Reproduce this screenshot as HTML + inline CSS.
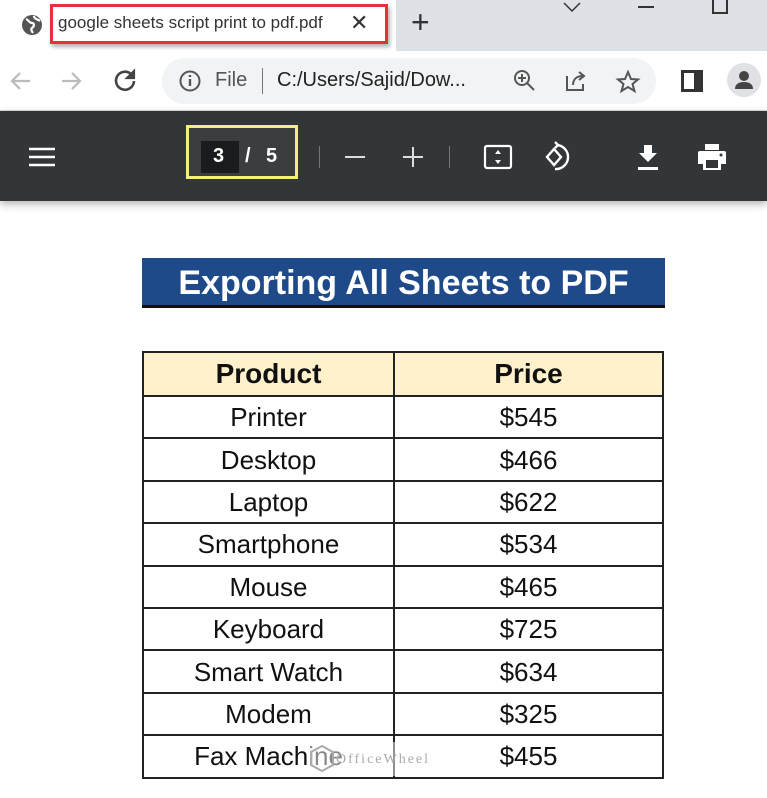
<!DOCTYPE html>
<html><head><style>
*{margin:0;padding:0;box-sizing:border-box}
body{width:767px;height:798px;overflow:hidden;background:#fff;font-family:"Liberation Sans",sans-serif;position:relative}
.abs{position:absolute}
table{border-collapse:collapse;position:absolute;left:142px;top:351px;width:522px}
td{border:2px solid #222;text-align:center;font-size:26px;color:#111;height:42.4px;padding:0;line-height:38px}
tr.h td{background:#fff1cc;font-weight:bold;font-size:28px;height:44px}
</style></head><body>
<div class="abs" style="left:0;top:0;width:767px;height:51px;background:#dee1e6"></div>
<div class="abs" style="left:0;top:0;width:396px;height:51px;background:#fff"></div>
<svg class="abs" style="left:20px;top:13px" width="24" height="24" viewBox="0 0 24 24"><circle cx="12" cy="12" r="10" fill="#555"/><path d="M6 6c3 1 3 4 6 4s2 4 0 5 1 5 1 5M14 3c0 3 3 3 6 5" stroke="#fff" stroke-width="2.2" fill="none"/></svg>
<div class="abs" style="left:50px;top:4px;width:338px;height:40px;border:3px solid #e8303a;box-shadow:2px 3px 4px rgba(0,0,0,.3)"></div>
<div class="abs" style="left:58px;top:13px;font-size:17px;color:#333;white-space:nowrap;width:278px;overflow:hidden">google sheets script print to pdf.pdf</div>
<div class="abs" style="left:350px;top:10px;font-size:22px;color:#333">✕</div>
<div class="abs" style="left:411px;top:4px;font-size:32px;color:#333">+</div>
<svg class="abs" style="left:562px;top:0" width="20" height="14"><path d="M2 3l8 8 8-8" stroke="#333" stroke-width="1.5" fill="none"/></svg>
<div class="abs" style="left:638px;top:6px;width:16px;height:2px;background:#333"></div>
<div class="abs" style="left:712px;top:-2px;width:16px;height:16px;border:2px solid #333"></div>
<div class="abs" style="left:0;top:51px;width:767px;height:60px;background:#fff;border-bottom:1px solid #ddd"></div>
<svg class="abs" style="left:8px;top:68px" width="130" height="26"><g stroke-width="2.2" fill="none"><path d="M22 13H4M12 5l-8 8 8 8" stroke="#bbb"/><path d="M54 13h18M64 5l8 8-8 8" stroke="#bbb"/><path d="M126 13a9 9 0 1 1-3-7" stroke="#444" stroke-width="2.6"/><path d="M126 3v7h-7z" fill="#444" stroke="#444"/></g></svg>
<div class="abs" style="left:162px;top:58px;width:494px;height:46px;border-radius:23px;background:#f1f3f4"></div>
<svg class="abs" style="left:178px;top:69px" width="24" height="24"><circle cx="12" cy="12" r="9.5" stroke="#555" stroke-width="2" fill="none"/><path d="M12 10v7M12 6v2" stroke="#555" stroke-width="2.4"/></svg>
<div class="abs" style="left:215px;top:69px;font-size:20px;color:#555">File</div>
<div class="abs" style="left:262px;top:68px;width:1px;height:26px;background:#777"></div>
<div class="abs" style="left:277px;top:69px;font-size:20px;color:#222">C:/Users/Sajid/Dow...</div>
<svg class="abs" style="left:512px;top:68px" width="130" height="28"><g stroke="#555" stroke-width="2" fill="none"><circle cx="10" cy="10" r="7"/><path d="M15 15l7 7M10 6v8M6 10h8"/><path d="M55 8v14h16v-6M61 17c0-6 4-9 10-9M67 4l5 4-5 4"/><path d="M116 4l3 7 7 .5-5.5 4.5 2 7-6.5-4-6.5 4 2-7-5.5-4.5 7-.5z"/></g></svg>
<div class="abs" style="left:681px;top:70px;width:22px;height:22px;border:3px solid #333;border-right-width:9px"></div>
<div class="abs" style="left:727px;top:63px;width:34px;height:34px;border-radius:50%;background:#dfe1e5"></div>
<svg class="abs" style="left:727px;top:63px" width="34" height="34"><circle cx="17" cy="13" r="5" fill="#444"/><path d="M8 26c0-5 4-7 9-7s9 2 9 7z" fill="#444"/></svg>
<div class="abs" style="left:0;top:111px;width:767px;height:90px;background:#323639;box-shadow:0 3px 8px rgba(0,0,0,.3)"></div>
<svg class="abs" style="left:28px;top:146px" width="28" height="22"><path d="M1 3h26M1 11h26M1 19h26" stroke="#fff" stroke-width="2.6"/></svg>
<div class="abs" style="left:186px;top:125px;width:112px;height:54px;border:3px solid #f4f07a;background:#3a3e41"></div>
<div class="abs" style="left:201px;top:141px;width:38px;height:32px;background:#191b1c"></div>
<div class="abs" style="left:213px;top:145px;font-size:20px;color:#fff;font-weight:bold">3</div>
<div class="abs" style="left:245px;top:145px;font-size:20px;color:#fff;font-weight:bold">/</div>
<div class="abs" style="left:266px;top:145px;font-size:20px;color:#fff;font-weight:bold">5</div>
<div class="abs" style="left:319px;top:146px;width:1px;height:22px;background:#777"></div>
<div class="abs" style="left:345px;top:156px;width:20px;height:2px;background:#ddd"></div>
<div class="abs" style="left:403px;top:156px;width:20px;height:2px;background:#ddd"></div>
<div class="abs" style="left:412px;top:147px;width:2px;height:20px;background:#ddd"></div>
<div class="abs" style="left:449px;top:146px;width:1px;height:22px;background:#777"></div>
<svg class="abs" style="left:482px;top:142px" width="32" height="30"><rect x="3" y="4" width="26" height="22" rx="2" stroke="#fff" stroke-width="2.2" fill="none"/><path d="M16 8l-3 4h6zM16 22l-3-4h6z" fill="#fff"/></svg>
<svg class="abs" style="left:540px;top:140px" width="34" height="34"><g stroke="#fff" stroke-width="2.4" fill="none"><path d="M14 9l7 8-7 8-7-8z"/><path d="M17 5a11 11 0 1 1-2 24"/><path d="M15 2l3 3-3 3"/></g></svg>
<svg class="abs" style="left:636px;top:143px" width="24" height="28"><path d="M8 2h8v8h5l-9 9-9-9h5z M2 24h20v3H2z" fill="#fff"/></svg>
<svg class="abs" style="left:697px;top:143px" width="30" height="28"><path d="M8 1h14v6H8zM3 8h24a2 2 0 0 1 2 2v11h-5v6H6v-6H1V10a2 2 0 0 1 2-2z" fill="#fff"/><rect x="9" y="17" width="12" height="8" fill="#323639"/><circle cx="24" cy="12" r="1.5" fill="#323639"/></svg>
<div class="abs" style="left:142px;top:258px;width:523px;height:50px;background:#1f4a8a;border-bottom:3px solid #111"></div>
<div class="abs" style="left:142px;top:263px;width:523px;text-align:center;color:#fff;font-weight:bold;font-size:34px;line-height:40px">Exporting All Sheets to PDF</div>
<table>
<colgroup><col style="width:251px"><col></colgroup>
<tr class="h"><td>Product</td><td>Price</td></tr>
<tr><td>Printer</td><td>$545</td></tr>
<tr><td>Desktop</td><td>$466</td></tr>
<tr><td>Laptop</td><td>$622</td></tr>
<tr><td>Smartphone</td><td>$534</td></tr>
<tr><td>Mouse</td><td>$465</td></tr>
<tr><td>Keyboard</td><td>$725</td></tr>
<tr><td>Smart Watch</td><td>$634</td></tr>
<tr><td>Modem</td><td>$325</td></tr>
<tr><td>Fax Machine</td><td>$455</td></tr>
</table>
<div class="abs" style="left:308px;top:742px;width:142px;height:34px;background:rgba(255,255,255,.5)"></div>
<svg class="abs" style="left:307px;top:742px" width="30" height="34"><path d="M15 4l11 6v13l-11 6-11-6V10z" stroke="#aaa" stroke-width="2" fill="none"/></svg>
<div class="abs" style="left:336px;top:752px;font-family:'Liberation Serif',serif;font-size:14px;color:#aaa;letter-spacing:2px">OfficeWheel</div>
</body></html>
